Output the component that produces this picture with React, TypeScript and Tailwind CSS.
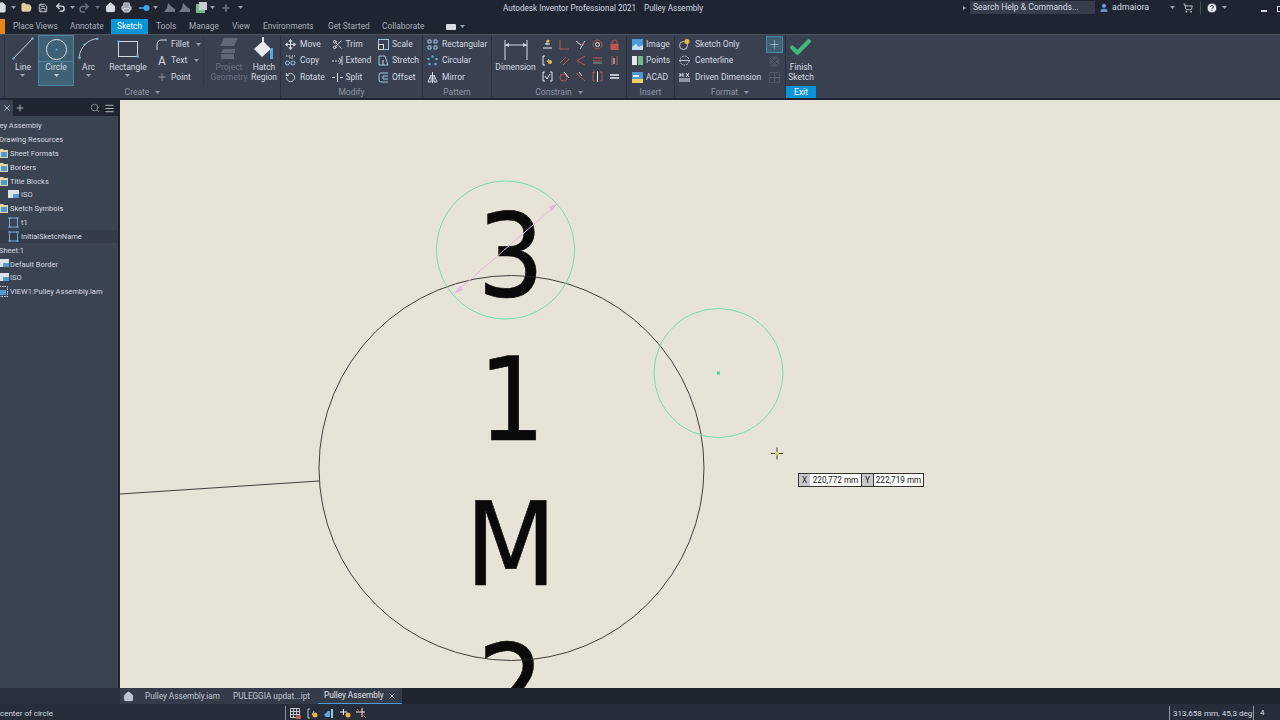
import React from 'react';
import { Home, Printer, Save, FolderOpen, File, Undo2, Redo2, ShoppingCart, HelpCircle, User, Check, Search, Menu, X, Plus, Move, RotateCw, Scissors } from 'lucide-react';

const Caret = ({ className = '' }: { className?: string }) => (
  <svg width="5" height="3" viewBox="0 0 5 3" className={`shrink-0 ${className}`}>
    <path d="M0 0h5L2.5 3z" fill="currentColor" />
  </svg>
);

function Ico({ children, size = 11, className = '' }: { children: React.ReactNode; size?: number; className?: string }) {
  return (
    <svg width={size} height={size} viewBox="0 0 11 11" fill="none" strokeWidth="1" className={`shrink-0 ${className}`}>
      {children}
    </svg>
  );
}

function Row({ icon, label, gap = 'gap-1' }: { icon: React.ReactNode; label: string; gap?: string }) {
  return (
    <div className={`flex items-center h-[16.5px] ${gap}`}>
      <span className="w-[12px] flex justify-center shrink-0">{icon}</span>
      <span className="whitespace-nowrap">{label}</span>
    </div>
  );
}

function Panel({ title, w, caret, children }: { title: string; w: string; caret?: boolean; children: React.ReactNode }) {
  return (
    <div className={`${w} shrink-0 flex flex-col border-r border-[#2b323e]`}>
      <div className="h-[51px] shrink-0 flex">{children}</div>
      <div className="h-[12px] shrink-0 flex items-center justify-center gap-1.5 text-[#8e96a3]">
        {title}
        {caret && <Caret />}
      </div>
    </div>
  );
}

function BigTool({ label, w, icon, active, dim, className = '' }: { label: React.ReactNode; w: string; icon: React.ReactNode; active?: boolean; dim?: boolean; className?: string }) {
  return (
    <div className={`${w} shrink-0 flex flex-col items-center ${active ? 'bg-[#3e6175] border border-[#4b86a3]' : ''} ${dim ? 'text-[#6d7583]' : ''} ${className}`}>
      <div className="h-[25px] shrink-0 flex items-center justify-center pt-[2px]">{icon}</div>
      <div className={`text-center leading-[10px] whitespace-nowrap ${active ? 'border-t border-[#4b86a3] w-full' : 'pt-0.5'}`}>{label}</div>
    </div>
  );
}

const DownCaret = ({ className = 'text-[#9aa1ac]' }: { className?: string }) => (
  <Caret className={`inline -translate-y-[2px] ${className}`} />
);

function TitleBar() {
  return (
    <div className="h-[19px] flex relative text-[#d5d9e0]">
      <div className="flex items-center h-[15px] text-[#d8dbe0]">
        <File className="w-[11px] h-[11px] -ml-[4px]" fill="#d8dbe0" />
        <Caret className="ml-[3.5px] text-[#9aa1ac]" />
        <FolderOpen className="w-[11px] h-[11px] ml-[5.5px] text-[#e3cf9c]" fill="#e3cf9c" />
        <Save className="w-[10px] h-[10px] ml-[6px]" />
        <Undo2 className="w-[11px] h-[11px] ml-[7px]" strokeWidth={3} />
        <Caret className="ml-[4px] text-[#9aa1ac]" />
        <Redo2 className="w-[12px] h-[12px] ml-[3px] text-[#697180]" strokeWidth={3} />
        <Caret className="ml-[5px] text-[#697180]" />
        <Home className="w-[11px] h-[11px] ml-[5px]" fill="#d8dbe0" />
        <Printer className="w-[11px] h-[11px] ml-[5px]" fill="#9aa1ac" />
        <svg width="11" height="8" viewBox="0 0 11 8" className="ml-[7px] shrink-0">
          <path d="M0 4h5" stroke="#3ea4e6" strokeWidth="1.5" />
          <circle cx="7.5" cy="4" r="3" fill="#3ea4e6" />
        </svg>
        <Caret className="ml-[3px] text-[#9aa1ac]" />
        <svg width="27" height="11" viewBox="0 0 27 11" className="ml-[5px] shrink-0">
          <path d="M1 10l3-4 1-5 4 4 3 2v3zM16 10l3-4 1-5 4 4 3 2v3z" fill="#6f7885" />
        </svg>
        <svg width="11" height="11" viewBox="0 0 11 11" className="ml-[6px] shrink-0">
          <rect x="0" y="2" width="9" height="9" fill="#7bb98a" />
          <rect x="3" y="0" width="8" height="8" fill="#c7ccd2" />
        </svg>
        <Caret className="ml-[3px] text-[#9aa1ac]" />
        <Plus className="w-[10px] h-[10px] ml-[6px] text-[#6f7885]" strokeWidth={4} />
        <Caret className="ml-[7px] text-[#9aa1ac]" />
      </div>
      <div className="absolute left-[503px] top-[2px] text-[8.15px] leading-[13px] whitespace-nowrap">Autodesk Inventor Professional 2021</div>
      <div className="absolute left-[644px] top-[2px] text-[8.15px] leading-[13px] whitespace-nowrap">Pulley Assembly</div>
      <div className="absolute left-[963px] top-[1px] w-[317px] h-[13px] flex items-center">
        <span className="border-l-[3px] border-y-[2.5px] border-y-transparent border-l-[#a0a6b0] mr-[4px] shrink-0" />
        <div className="w-[125px] shrink-0 h-[13px] bg-[#363e4c] text-[8.5px] pl-[3px] leading-[12px] whitespace-nowrap">Search Help &amp; Commands...</div>
        <User className="w-[10px] h-[10px] ml-[4px] text-[#6f9be0] shrink-0" fill="#6f9be0" />
        <span className="ml-[3px] w-[58px] shrink-0 text-[8.8px]">admaiora</span>
        <Caret className="text-[#9aa1ac]" />
        <ShoppingCart className="w-[10px] h-[10px] ml-[8px] shrink-0" />
        <span className="ml-[7px] h-[12px] w-px bg-[#4a5260] shrink-0" />
        <HelpCircle className="w-[12px] h-[12px] ml-[5px] text-[#1e2530] shrink-0" fill="#e4e6ea" />
        <Caret className="ml-[4px] text-[#9aa1ac]" />
        <span className="ml-[34px] w-[6px] h-[2px] mt-[7px] bg-[#d5d9e0] shrink-0" />
        <span className="ml-[10px] w-[6px] h-[6px] mt-[3px] border border-[#d5d9e0] shrink-0" />
      </div>
    </div>
  );
}

function MenuTabs() {
  return (
    <div className="h-[15px] flex items-center text-[8.3px] text-[#a9afb9] whitespace-nowrap">
      <div className="w-[5px] h-[15px] bg-[#e8861a]" />
      <span className="ml-[8px] w-[57px]">Place Views</span>
      <span className="w-[41px]">Annotate</span>
      <span className="w-[37px] h-[15px] bg-[#0696d7] text-white flex items-center justify-center">Sketch</span>
      <span className="ml-[8px] w-[33px]">Tools</span>
      <span className="w-[43px]">Manage</span>
      <span className="w-[31px]">View</span>
      <span className="w-[65px]">Environments</span>
      <span className="w-[54px]">Get Started</span>
      <span className="w-[64px]">Collaborate</span>
      <span className="w-[10px] h-[6px] bg-[#d8dbe0] rounded-[1px]" />
      <Caret className="ml-[4px] text-[#9aa1ac]" />
    </div>
  );
}

const cyan = '#5fb3e0';

function Ribbon() {
  return (
    <div className="h-[66px] bg-[#394150] border-t border-[#4c5564] border-b-2 border-b-[#1e2530] flex text-[8.5px] text-[#d5d9e0]">
      <div className="w-[5px] shrink-0 border-r border-[#2b323e]" />
      <Panel title="Create" w="w-[276px]" caret>
        <BigTool
          w="w-[33px]"
          className="pl-[3px]"
          label={<>Line<br /><DownCaret /></>}
          icon={<svg width="22" height="23" viewBox="0 0 22 23"><path d="M1 22L21 1" stroke="#d5d9e0" /><circle cx="1.5" cy="21.5" r="1.3" fill={cyan} /><circle cx="20.5" cy="1.5" r="1.3" fill={cyan} /></svg>}
        />
        <BigTool
          w="w-[36px]"
          active
          label={<>Circle<br /><DownCaret className="text-[#c5cad2]" /></>}
          icon={<svg width="23" height="23" viewBox="0 0 24 24"><circle cx="12" cy="12" r="10.5" stroke="#e0e3e8" fill="none" /><circle cx="12" cy="12" r="1" fill={cyan} /></svg>}
        />
        <BigTool
          w="w-[29px]"
          label={<>Arc<br /><DownCaret /></>}
          icon={<svg width="22" height="23" viewBox="0 0 24 24"><path d="M1 23C2 11 10 2 22 1" stroke="#d5d9e0" fill="none" /><circle cx="2" cy="22" r="1.3" fill={cyan} /><circle cx="21" cy="1.5" r="1.3" fill={cyan} /><circle cx="7" cy="8" r="1.2" fill={cyan} /></svg>}
        />
        <BigTool
          w="w-[50px]"
          label={<>Rectangle<br /><DownCaret /></>}
          icon={<svg width="22" height="18" viewBox="0 0 22 18"><rect x="1.5" y="1.5" width="19" height="15" stroke="#d5d9e0" fill="none" /><circle cx="1.5" cy="1.5" r="1.3" fill={cyan} /><circle cx="20.5" cy="16.5" r="1.3" fill={cyan} /></svg>}
        />
        <div className="w-[51px] shrink-0 pl-[3px] pt-[1px] border-r border-[#323a48]">
          <div className="flex items-center h-[16.5px] gap-[3px] whitespace-nowrap">
            <svg width="12" height="11" viewBox="0 0 12 11" className="shrink-0"><path d="M1 11V6Q1 1 6 1h5" stroke="#d5d9e0" fill="none" /></svg>
            Fillet <Caret className="ml-1 text-[#9aa1ac]" />
          </div>
          <div className="flex items-center h-[16.5px] gap-[3px] whitespace-nowrap">
            <span className="w-[12px] text-center text-[12px] leading-none">A</span>
            Text <Caret className="ml-1 text-[#9aa1ac]" />
          </div>
          <div className="flex items-center h-[16.5px] gap-[3px] whitespace-nowrap">
            <Plus className="w-[12px] h-[12px]" strokeWidth={1} />
            Point
          </div>
        </div>
        <BigTool
          w="w-[46px]"
          className="pl-[4px]"
          dim
          label={<>Project<br />Geometry</>}
          icon={<svg width="22" height="22" viewBox="0 0 22 22"><path d="M6 0h14l-4 8H2zM5 11h12v4H3zM3 16h13v5H3z" fill="#606875" /></svg>}
        />
        <BigTool
          w="w-[28px]"
          label={<>Hatch<br />Region</>}
          icon={<svg width="22" height="24" viewBox="0 0 22 24"><path d="M1 12l9-8 8 8-9 8z" fill="#e8eaee" /><path d="M9 0h2v9H9z" fill="#e8eaee" /><path d="M17 11h3v11h-3z" fill="#5ea7dc" /></svg>}
        />
      </Panel>
      <Panel title="Modify" w="w-[142px]">
        <div className="w-[50px] shrink-0 pl-[3px] pt-[1px]">
          <Row icon={<Move className="w-[11px] h-[11px]" strokeWidth={2.5} />} label="Move" gap="gap-[4px]" />
          <Row icon={<Ico><circle cx="2.5" cy="8" r="2" stroke="#9bc7e8" /><circle cx="8" cy="8" r="2" stroke="#9bc7e8" /><path d="M1 1h4v3M7 4V1h3" stroke="#e8eaee" strokeDasharray="1.5 1" /></Ico>} label="Copy" gap="gap-[4px]" />
          <Row icon={<RotateCw className="w-[11px] h-[11px] -scale-x-100" />} label="Rotate" gap="gap-[4px]" />
        </div>
        <div className="w-[46px] shrink-0 pt-[1px]">
          <Row icon={<Scissors className="w-[11px] h-[11px]" />} label="Trim" gap="gap-[2.5px]" />
          <Row icon={<Ico><path d="M0 6h7" stroke="#d5d9e0" strokeDasharray="2 1" /><path d="M7 3l2 3-2 3M10 1v9" stroke="#d5d9e0" /></Ico>} label="Extend" gap="gap-[2.5px]" />
          <Row icon={<Ico><path d="M0 5.5h3M8 5.5h3M5.5 1v9" stroke="#d5d9e0" /></Ico>} label="Split" gap="gap-[2.5px]" />
        </div>
        <div className="pt-[1px]">
          <Row icon={<Ico><rect x=".5" y=".5" width="10" height="10" stroke="#9bc7e8" /><rect x=".5" y="5.5" width="5" height="5" stroke="#d5d9e0" /></Ico>} label="Scale" gap="gap-[3px]" />
          <Row icon={<Ico><path d="M1 1h6l3 9H1z" stroke="#9bc7e8" /><path d="M5 5v5" stroke="#d5d9e0" /></Ico>} label="Stretch" gap="gap-[3px]" />
          <Row icon={<Ico><path d="M10 1H3Q1 1 1 3v5q0 2 2 2h7M10 4H5v3h5" stroke="#9bc7e8" /></Ico>} label="Offset" gap="gap-[3px]" />
        </div>
      </Panel>
      <Panel title="Pattern" w="w-[69px]">
        <div className="pl-[3px] pt-[1px]">
          <Row icon={<Ico><path d="M1 1h3v3H1zM7 1h3v3H7zM1 7h3v3H1zM7 7h3v3H7z" stroke="#9bc7e8" /></Ico>} label="Rectangular" gap="gap-[4px]" />
          <Row icon={<Ico><circle cx="5.5" cy="1.5" r="1.3" fill="#5ea7dc" /><circle cx="1.5" cy="4" r="1.3" fill="#5ea7dc" /><circle cx="9.5" cy="4" r="1.3" fill="#5ea7dc" /><circle cx="2.5" cy="9" r="1.3" fill="#5ea7dc" /><circle cx="8.5" cy="9" r="1.3" fill="#5ea7dc" /></Ico>} label="Circular" gap="gap-[4px]" />
          <Row icon={<Ico><path d="M5.5 0v11M4 3L1 10h3zM7 3l3 7H7z" stroke="#d5d9e0" /></Ico>} label="Mirror" gap="gap-[4px]" />
        </div>
      </Panel>
      <Panel title="Constrain" w="w-[135px]" caret>
        <BigTool
          w="w-[47px]"
          label={<>Dimension</>}
          icon={<svg width="24" height="22" viewBox="0 0 24 22"><path d="M1 2v20M23 2v20M1 7h22" stroke="#d5d9e0" /><path d="M1 7l4-2v4zM23 7l-4-2v4z" fill="#d5d9e0" /></svg>}
        />
        <div className="grid grid-cols-5 w-[84px] pt-[1px] h-[50px] items-center justify-items-center">
          <Ico><path d="M1 9h9M5 2v4M3 5h5" stroke="#e8eaee" /><circle cx="6" cy="2" r="1.5" fill="#efb33f" /></Ico>
          <Ico><path d="M1 1v9h9" stroke="#c0574d" /></Ico>
          <Ico><path d="M1 2l5 4M10 2L5 10" stroke="#e8eaee" /><path d="M6 6l4-3" stroke="#c0574d" /></Ico>
          <Ico><circle cx="5.5" cy="5.5" r="4.5" stroke="#c0574d" /><circle cx="5.5" cy="5.5" r="2" stroke="#e8eaee" /></Ico>
          <Ico><rect x="1.5" y="5" width="8" height="6" fill="#c0574d" /><path d="M3 5V3q0-2 2.5-2T8 3v2" stroke="#c0574d" /></Ico>
          <Ico><path d="M3 1H1v9h2M7 4l-2 3" stroke="#e8eaee" /><circle cx="8" cy="7" r="2" fill="#efb33f" /></Ico>
          <Ico><path d="M1 8l6-6M4 10l6-6" stroke="#c0574d" /></Ico>
          <Ico><path d="M10 1L2 6l8 4" stroke="#c0574d" /></Ico>
          <Ico><path d="M1 3h9M1 6h9" stroke="#c0574d" /><path d="M1 8h9" stroke="#8f95a0" /></Ico>
          <Ico><path d="M3 1v9M8 1v9" stroke="#c0574d" /><path d="M5 3v6" stroke="#e8eaee" /></Ico>
          <Ico><path d="M3 1H1v9h2M8 1h2v9H8M3 5l2 3 3-5" stroke="#e8eaee" /></Ico>
          <Ico><circle cx="4.5" cy="6.5" r="3.5" stroke="#c0574d" /><path d="M5 1l5 6" stroke="#e8eaee" /></Ico>
          <Ico><path d="M1 2l9 8" stroke="#c0574d" /><path d="M4 1l3 4" stroke="#e8eaee" /></Ico>
          <Ico><path d="M3 1H1v9h2M8 1h2v9H8" stroke="#c0574d" /><path d="M5.5 0v11" stroke="#e8eaee" /></Ico>
          <Ico><path d="M1 4h9M1 7h9" stroke="#e8eaee" strokeWidth="1.3" /></Ico>
        </div>
      </Panel>
      <Panel title="Insert" w="w-[48px]">
        <div className="pl-[4px] pt-[1px]">
          <Row icon={<Ico><rect width="11" height="11" fill="#4f9ad6" /><path d="M0 8l4-3 3 3 4-2v5H0z" fill="#c4dff3" /></Ico>} label="Image" gap="gap-[3px]" />
          <Row icon={<Ico><path d="M0 1h5v9H0z" fill="#e4e6ea" /><path d="M6 1h5v9H6z" fill="#6fb98a" /></Ico>} label="Points" gap="gap-[3px]" />
          <Row icon={<Ico><rect width="11" height="11" fill="#4f9ad6" /><path d="M0 7h11v4H0z" fill="#efcf6a" /><path d="M1 3h6v2H1z" fill="#e8eaee" /></Ico>} label="ACAD" gap="gap-[3px]" />
        </div>
      </Panel>
      <Panel title="Format" w="w-[111px]" caret>
        <div className="w-[91px] shrink-0 pl-[3px] pt-[1px]">
          <Row icon={<Ico><circle cx="4.5" cy="6.5" r="4" stroke="#c2c7cf" /><circle cx="8" cy="2.5" r="2.5" fill="#efb33f" /></Ico>} label="Sketch Only" gap="gap-[5px]" />
          <Row icon={<Ico><circle cx="5.5" cy="5.5" r="4.5" stroke="#c2c7cf" strokeDasharray="2 1" /><path d="M0 5.5h11" stroke="#c2c7cf" /></Ico>} label="Centerline" gap="gap-[5px]" />
          <Row icon={<Ico><path d="M0 7h11M0 9h11" stroke="#e8eaee" /><path d="M1 1v4M4 1v4M1 3h3M7 1l3 4M10 1L7 5" stroke="#e8eaee" /></Ico>} label="Driven Dimension" gap="gap-[5px]" />
        </div>
        <div className="flex flex-col items-center pt-[1px] gap-[1px]">
          <div className="w-[17px] h-[17px] bg-[#3e6175] border border-[#4b86a3] flex items-center justify-center">
            <Plus className="w-[13px] h-[13px] text-[#e8eaee]" strokeWidth={1} />
          </div>
          <div className="w-[17px] h-[15px] flex items-center justify-center">
            <Ico><rect x=".5" y=".5" width="10" height="10" fill="#4c5462" /><path d="M1 1l9 9M10 1l-9 9" stroke="#2f3643" /></Ico>
          </div>
          <div className="w-[17px] h-[15px] flex items-center justify-center">
            <Ico><rect x=".5" y=".5" width="10" height="10" stroke="#596170" strokeDasharray="2 1" /><path d="M5.5 0v11M0 5.5h11" stroke="#596170" /></Ico>
          </div>
        </div>
      </Panel>
      <div className="w-[30px] shrink-0 flex flex-col items-center">
        <div className="h-[51px] shrink-0 flex flex-col items-center">
          <Check className="w-[25px] h-[25px] text-[#3fb87a] shrink-0" strokeWidth={4} />
          <div className="text-center leading-[10px] mt-[2px]">Finish<br />Sketch</div>
        </div>
        <div className="w-[30px] h-[12px] bg-[#0696d7] text-white flex items-center justify-center">Exit</div>
      </div>
    </div>
  );
}

type TreeItem = { label: string; ml: number; icon?: 'folder' | 'sheet' | 'sym' | 'view'; iconMl?: number; hi?: boolean };

const tree: TreeItem[] = [
  { label: 'Pulley Assembly', ml: -13 },
  { label: 'Drawing Resources', ml: -1 },
  { label: 'Sheet Formats', ml: 10, icon: 'folder', iconMl: -1 },
  { label: 'Borders', ml: 10, icon: 'folder', iconMl: -1 },
  { label: 'Title Blocks', ml: 10, icon: 'folder', iconMl: -1 },
  { label: 'ISO', ml: 21, icon: 'sheet', iconMl: 8 },
  { label: 'Sketch Symbols', ml: 10, icon: 'folder', iconMl: -1 },
  { label: 't1', ml: 21, icon: 'sym', iconMl: 8 },
  { label: 'InitialSketchName', ml: 21, icon: 'sym', iconMl: 8, hi: true },
  { label: 'Sheet:1', ml: -1 },
  { label: 'Default Border', ml: 10, icon: 'sheet', iconMl: -2 },
  { label: 'ISO', ml: 10, icon: 'sheet', iconMl: -2 },
  { label: 'VIEW1:Pulley Assembly.iam', ml: 10, icon: 'view', iconMl: -1 },
];

function TreeIcon({ kind }: { kind: TreeItem['icon'] }) {
  if (kind === 'folder') {
    return (
      <svg width="9" height="10" viewBox="0 0 9 10">
        <path d="M0 1h4l1 1h4v8H0z" fill="#e8d6a0" />
        <rect x="2" y="4" width="6" height="5" fill="#4f9ad6" />
      </svg>
    );
  }
  if (kind === 'sheet') {
    return (
      <svg width="11" height="8" viewBox="0 0 11 8">
        <rect width="11" height="8" fill="#dfe3e8" />
        <rect x="5" y="4" width="6" height="4" fill="#4f9ad6" />
      </svg>
    );
  }
  if (kind === 'sym') {
    return (
      <svg width="11" height="11" viewBox="0 0 11 11">
        <rect x="1.5" y="1" width="8" height="9" stroke="#6fa9d8" fill="none" />
        <path d="M0 1h3M8 1h3M0 10h3M8 10h3" stroke="#6fa9d8" />
      </svg>
    );
  }
  return (
    <svg width="9" height="11" viewBox="0 0 9 11">
      <rect x=".5" y=".5" width="8" height="10" stroke="#dfe3e8" strokeDasharray="1.5 1" fill="none" />
      <rect x="1" y="4" width="6" height="5" fill="#4f9ad6" />
    </svg>
  );
}

function Sidebar() {
  return (
    <div className="w-[120px] shrink-0 bg-[#3a4352] border-r-2 border-[#20262f] flex flex-col overflow-hidden text-[7.5px] text-[#d5d9e0]">
      <div className="h-[16px] bg-[#20262f] flex items-center text-[#c2c7cf]">
        <div className="w-[13px] h-[16px] bg-[#3a4352] flex items-center justify-center">
          <X className="w-[10px] h-[10px]" />
        </div>
        <Plus className="w-[10px] h-[10px] ml-[2px]" />
        <Search className="w-[10px] h-[10px] ml-auto text-[#8e96a3]" />
        <Menu className="w-[11px] h-[11px] ml-[4px] mr-[3px]" />
      </div>
      <div className="pt-[3px] flex flex-col">
        {tree.map((t, i) => (
          <div key={i} className={`h-[13.83px] relative flex items-center whitespace-nowrap ${t.hi ? 'bg-[#343c4a]' : ''}`}>
            {t.icon && (
              <span className="absolute top-[1.5px]" style={{ left: t.iconMl }}>
                <TreeIcon kind={t.icon} />
              </span>
            )}
            <span style={{ marginLeft: t.ml }}>{t.label}</span>
          </div>
        ))}
      </div>
    </div>
  );
}

function Canvas() {
  return (
    <div className="flex-1 bg-[#e7e4d7] relative overflow-hidden">
      <svg className="absolute inset-0 w-full h-full" viewBox="120 100 1160 588">
        <g fill="#0a0a0a" stroke="#0a0a0a" strokeWidth="0.6" fontFamily="'DejaVu Sans', sans-serif" fontSize="115" textAnchor="middle">
          <text transform="translate(511 296) scale(.92 1)">3</text>
          <text transform="translate(512 440) scale(.92 1)">1</text>
          <text transform="translate(511 585) scale(.92 1)">M</text>
          <text transform="translate(511 727) scale(.92 1)">2</text>
        </g>
        <circle cx="511.5" cy="468" r="192.5" fill="none" stroke="#2b2b2b" strokeWidth="0.9" />
        <path d="M120 494L319 481" stroke="#2b2b2b" strokeWidth="0.9" />
        <circle cx="505.5" cy="250" r="69" fill="none" stroke="#6fe0a8" strokeWidth="1" />
        <circle cx="718.5" cy="373" r="64.5" fill="none" stroke="#6fe0a8" strokeWidth="1" />
        <rect x="717" y="371.5" width="3" height="3" fill="#49d693" />
        <path d="M456 292L556 205" stroke="#e6b4e6" strokeWidth="1" />
        <path d="M454 294l9-4-3-4zM558 203l-9 4 3 4z" fill="#e6b4e6" />
        <path d="M771 453.5h12M777 447.5v12" stroke="#3a3a30" strokeWidth="1" />
        <circle cx="777" cy="453.5" r="2" fill="#d6d24a" />
      </svg>
      <div className="absolute left-[678px] top-[373px] h-[14px] flex text-[8.2px] text-[#222] border border-[#333] bg-white items-stretch leading-[12px]">
        <span className="w-[11px] bg-[#c9c9c9] text-center">X</span>
        <span className="w-[51px] text-center">220,772 mm</span>
        <span className="w-[12px] bg-[#c9c9c9] text-center border-l border-[#333]">Y</span>
        <span className="w-[50px] text-center border-l border-[#333]">222,719 mm</span>
      </div>
    </div>
  );
}

function TabBar() {
  return (
    <div className="h-[16px] bg-[#20262f] flex text-[8.2px] text-[#c2c7cf]">
      <div className="w-[120px] bg-[#2a313d]" />
      <div className="w-[282px] bg-[#343c4a] flex items-center pl-[3px] whitespace-nowrap">
        <Home className="w-[11px] h-[11px] shrink-0" fill="#c2c7cf" />
        <span className="ml-[11px] w-[88px] shrink-0">Pulley Assembly.iam</span>
        <span className="w-[85px] shrink-0">PULEGGIA updat...ipt</span>
        <div className="h-[16px] w-[84px] pl-[6px] flex items-center border-b border-[#4f9ad6] text-[#e4e6ea] gap-[4px]">
          Pulley Assembly <X className="w-[8px] h-[8px] shrink-0" />
        </div>
      </div>
    </div>
  );
}

function StatusBar() {
  return (
    <div className="h-[16px] bg-[#272e3a] flex items-center text-[8px] text-[#d5d9e0] whitespace-nowrap">
      <span className="w-[285px] pt-[4px]">center of circle</span>
      <span className="w-px h-[14px] mt-[2px] bg-[#8e96a3]" />
      <div className="flex items-center gap-[5.5px] ml-[4px] pt-[2px]">
        <Ico><path d="M.5.5h9v9h-9zM.5 3.5h9M.5 6.5h9M3.5.5v9M6.5.5v9" stroke="#c2c7cf" /><rect x="6" y="7" width="5" height="4" fill="#c0574d" /></Ico>
        <Ico><path d="M3 1H1v9h2M7 3L5 7" stroke="#c2c7cf" /><circle cx="8" cy="7" r="2.5" fill="#efb33f" /></Ico>
        <Ico><path d="M1 7l4-4h2v6H3z" fill="#5ea7dc" /><path d="M8 1h2v9H8z" fill="#9bc7e8" /></Ico>
        <Ico><path d="M0 4h7M3.5 1v6" stroke="#e8eaee" /><circle cx="8" cy="7" r="2.5" fill="#efb33f" /></Ico>
        <Ico><path d="M0 4h9M6 0v9" stroke="#e8eaee" /><path d="M1 1l9 9" stroke="#c0574d" /></Ico>
      </div>
      <div className="ml-auto flex items-center h-[16px] pt-[2px]">
        <span className="w-px h-[14px] bg-[#8e96a3]" />
        <span className="w-[83px] pl-[3px] text-[8.1px]">313,658 mm, 45,3 deg</span>
        <span className="w-px h-[14px] bg-[#8e96a3]" />
        <span className="w-[26px] pl-[6px]">4</span>
      </div>
    </div>
  );
}

export default function App() {
  return (
    <div className="w-[1280px] h-[720px] bg-[#1e2530] flex flex-col overflow-hidden font-['Roboto',sans-serif]">
      <TitleBar />
      <MenuTabs />
      <Ribbon />
      <div className="flex-1 flex min-h-0">
        <Sidebar />
        <Canvas />
      </div>
      <TabBar />
      <StatusBar />
    </div>
  );
}
